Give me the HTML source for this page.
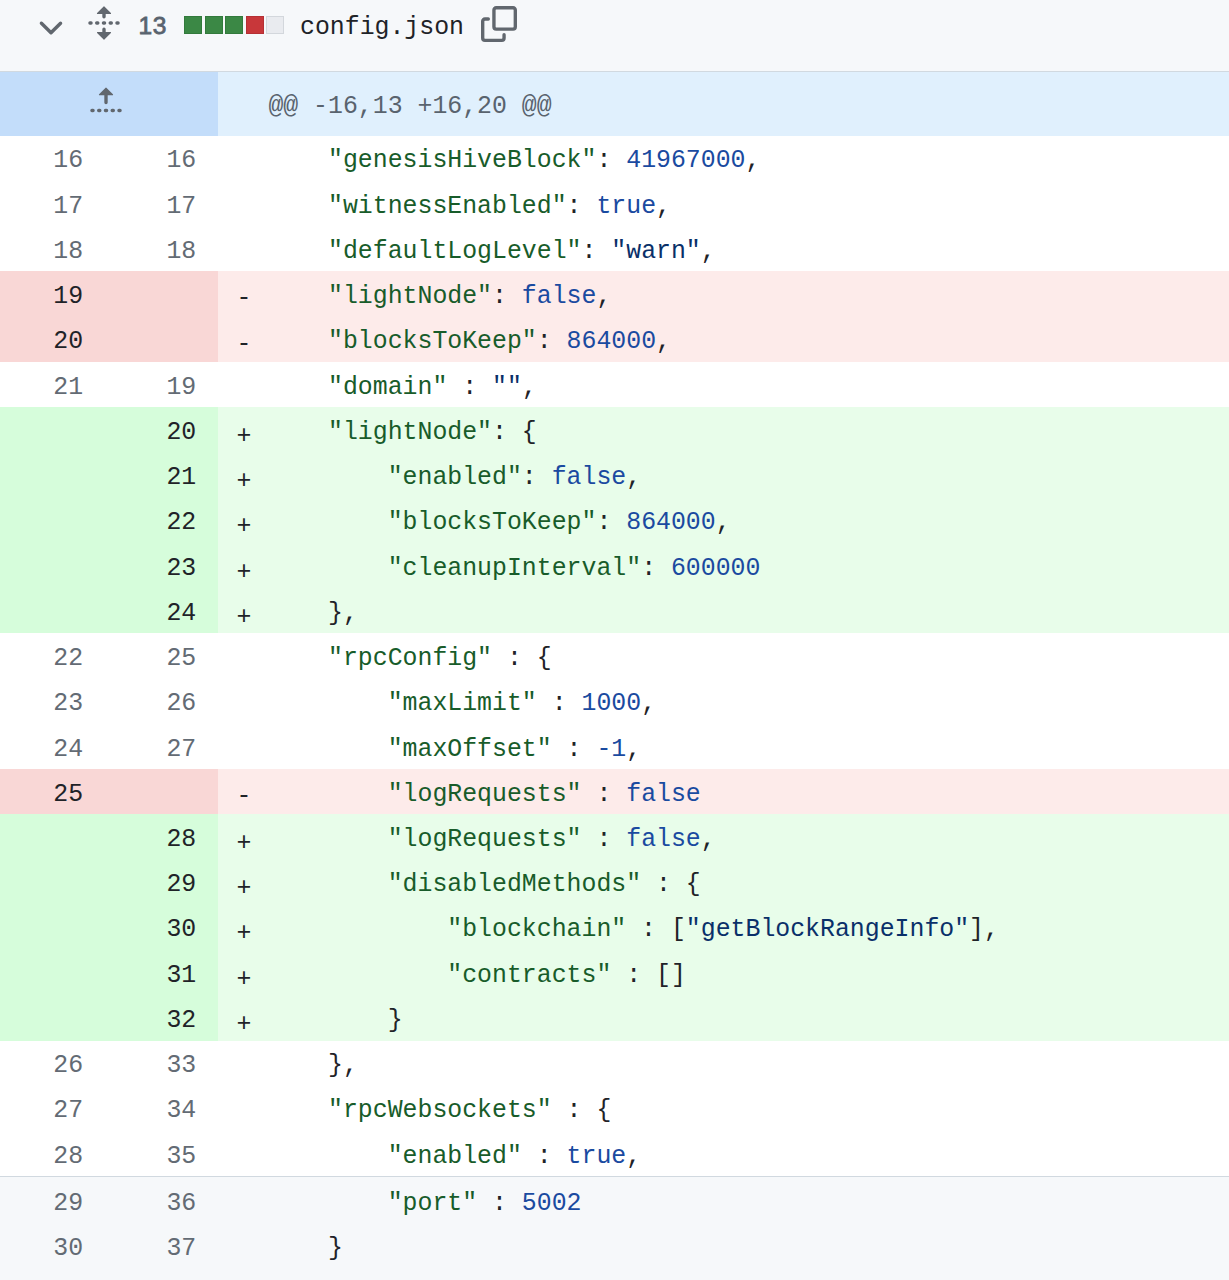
<!DOCTYPE html>
<html><head><meta charset="utf-8"><style>
*{margin:0;padding:0;box-sizing:border-box}
html,body{width:1229px;height:1280px;overflow:hidden;background:#fff}
body{position:relative;font-family:"Liberation Mono",monospace;}
.hdr{position:absolute;left:0;top:0;width:1229px;height:72px;background:#f6f8fa;border-bottom:1px solid #d1d9e0}
.hunk{position:absolute;left:0;top:72px;width:1229px;height:63.70px;background:#e0f0fd}
.hunk .num{position:absolute;left:0;top:0;width:218.40px;height:100%;background:#c3ddfa}
.hunk .tx{position:absolute;left:268.40px;top:3.1px;line-height:63.70px;font-size:24.857px;color:#59636e;white-space:pre}
.row{position:absolute;left:0;width:1229px;height:45.74px;background:#fff}
.row .num{position:absolute;left:0;top:0;width:218.40px;height:100%}
.ln{position:absolute;top:2.7px;line-height:45.24px;font-size:24.857px;color:#636b74;text-align:right;white-space:pre}
.ln.ol{right:1145.90px}
.ln.nl{right:1032.80px}
.code{position:absolute;left:218.40px;right:0;top:0;height:100%;font-size:24.857px;line-height:45.24px;color:#1f2328;white-space:pre}
.mk{position:absolute;left:18.10px;top:4.9px}
.add .mk{top:6.7px}
.tx{position:absolute;left:50.00px;top:2.7px}
.k{color:#185c2a}.n{color:#1a4aa0}.s{color:#0a3069}
.del .num{background:#f9d7d6}.del .code{background:#fdebea}
.add .num{background:#d6fddb}.add .code{background:#e8fdea}
.del .ln,.add .ln{color:#1f2328}
.foot{background:#f6f8fa}
.foot .ln,.foot .tx{top:5.0px}
.footbg{position:absolute;left:0;top:1176.22px;width:1229px;bottom:0;background:#f6f8fa}
.footline{position:absolute;left:0;top:1176.22px;width:1229px;height:1px;background:#d1d9e0}
.cnt{position:absolute;left:138.5px;top:0;line-height:52px;font-family:"Liberation Sans",sans-serif;font-weight:normal;-webkit-text-stroke:0.8px #59636e;font-size:24.5px;color:#59636e;letter-spacing:0.6px}
.sq{position:absolute;top:16px;width:18px;height:18px}
.fn{position:absolute;left:300px;top:0;line-height:54.6px;font-size:24.857px;color:#1f2328;white-space:pre}
</style></head>
<body>
<div class="hdr"><svg style="position:absolute;left:33.40px;top:8.10px" width="36.00" height="36.00" viewBox="0 0 16 16" fill="#61676e"><path d="M12.78 6.22a.749.749 0 0 1 0 1.06l-4.25 4.25a.749.749 0 0 1-1.06 0L3.22 7.28a.749.749 0 0 1 .326-1.275.749.749 0 0 1 .734.215L8 9.939l3.72-3.719a.749.749 0 0 1 1.06 0Z"/></svg><svg style="position:absolute;left:86.45px;top:5.10px" width="36.00" height="36.00" viewBox="0 0 16 16" fill="#61676e"><path d="m8.177.677 2.896 2.896a.25.25 0 0 1-.177.427H8.75v1.25a.75.75 0 0 1-1.5 0V4H5.104a.25.25 0 0 1-.177-.427L7.823.677a.25.25 0 0 1 .354 0ZM7.25 10.75a.75.75 0 0 1 1.5 0V12h2.146a.25.25 0 0 1 .177.427l-2.896 2.896a.25.25 0 0 1-.354 0l-2.896-2.896A.25.25 0 0 1 5.104 12H7.25v-1.25Zm-5-2a.75.75 0 0 0 0-1.5h-.5a.75.75 0 0 0 0 1.5h.5ZM6 8a.75.75 0 0 1-.75.75h-.5a.75.75 0 0 1 0-1.5h.5A.75.75 0 0 1 6 8Zm2.25.75a.75.75 0 0 0 0-1.5h-.5a.75.75 0 0 0 0 1.5h.5ZM12 8a.75.75 0 0 1-.75.75h-.5a.75.75 0 0 1 0-1.5h.5A.75.75 0 0 1 12 8Zm2.25.75a.75.75 0 0 0 0-1.5h-.5a.75.75 0 0 0 0 1.5h.5Z"/></svg><span class="cnt">13</span><div class="sq" style="left:184.30px;background:#3b8845;border:1px solid #327a3c"></div><div class="sq" style="left:204.73px;background:#3b8845;border:1px solid #327a3c"></div><div class="sq" style="left:225.16px;background:#3b8845;border:1px solid #327a3c"></div><div class="sq" style="left:245.59px;background:#c8373a;border:1px solid #b53034"></div><div class="sq" style="left:266.02px;background:#e9ebef;border:1px solid #d3d7dc"></div><span class="fn">config.json</span><svg style="position:absolute;left:481.00px;top:5.60px" width="36.00" height="36.00" viewBox="0 0 16 16" fill="#61676e"><path d="M0 6.75C0 5.784.784 5 1.75 5h1.5a.75.75 0 0 1 0 1.5h-1.5a.25.25 0 0 0-.25.25v7.5c0 .138.112.25.25.25h7.5a.25.25 0 0 0 .25-.25v-1.5a.75.75 0 0 1 1.5 0v1.5A1.75 1.75 0 0 1 9.25 16h-7.5A1.75 1.75 0 0 1 0 14.25ZM5 1.75C5 .784 5.784 0 6.75 0h7.5C15.216 0 16 .784 16 1.75v7.5A1.75 1.75 0 0 1 14.25 11h-7.5A1.75 1.75 0 0 1 5 9.25Zm1.75-.25a.25.25 0 0 0-.25.25v7.5c0 .138.112.25.25.25h7.5a.25.25 0 0 0 .25-.25v-7.5a.25.25 0 0 0-.25-.25Z"/></svg></div>
<div class="hunk"><div class="num"></div><svg style="position:absolute;left:88.00px;top:12.10px" width="36.00" height="36.00" viewBox="0 0 16 16" fill="#61676e"><path d="M7.823 1.677 4.927 4.573A.25.25 0 0 0 5.104 5H7.25v3.236a.75.75 0 1 0 1.5 0V5h2.146a.25.25 0 0 0 .177-.427L8.177 1.677a.25.25 0 0 0-.354 0ZM13.75 11a.75.75 0 0 0 0 1.5h.5a.75.75 0 0 0 0-1.5h-.5Zm-3.75.75a.75.75 0 0 1 .75-.75h.5a.75.75 0 0 1 0 1.5h-.5a.75.75 0 0 1-.75-.75ZM7.75 11a.75.75 0 0 0 0 1.5h.5a.75.75 0 0 0 0-1.5h-.5ZM4 11.75a.75.75 0 0 1 .75-.75h.5a.75.75 0 0 1 0 1.5h-.5a.75.75 0 0 1-.75-.75ZM1.75 11a.75.75 0 0 0 0 1.5h.5a.75.75 0 0 0 0-1.5h-.5Z"/></svg><span class="tx">@@ -16,13 +16,20 @@</span></div>
<div class="footbg"></div>
<div class="row ctx" style="top:135.70px"><div class="num"></div><span class="ln ol">16</span><span class="ln nl">16</span><div class="code"><span class="mk"></span><span class="tx">    <span class="k">&quot;genesisHiveBlock&quot;</span>: <span class="n">41967000</span>,</span></div></div>
<div class="row ctx" style="top:180.94px"><div class="num"></div><span class="ln ol">17</span><span class="ln nl">17</span><div class="code"><span class="mk"></span><span class="tx">    <span class="k">&quot;witnessEnabled&quot;</span>: <span class="n">true</span>,</span></div></div>
<div class="row ctx" style="top:226.18px"><div class="num"></div><span class="ln ol">18</span><span class="ln nl">18</span><div class="code"><span class="mk"></span><span class="tx">    <span class="k">&quot;defaultLogLevel&quot;</span>: <span class="s">&quot;warn&quot;</span>,</span></div></div>
<div class="row del" style="top:271.42px"><div class="num"></div><span class="ln ol">19</span><span class="ln nl"></span><div class="code"><span class="mk">-</span><span class="tx">    <span class="k">&quot;lightNode&quot;</span>: <span class="n">false</span>,</span></div></div>
<div class="row del" style="top:316.66px"><div class="num"></div><span class="ln ol">20</span><span class="ln nl"></span><div class="code"><span class="mk">-</span><span class="tx">    <span class="k">&quot;blocksToKeep&quot;</span>: <span class="n">864000</span>,</span></div></div>
<div class="row ctx" style="top:361.90px"><div class="num"></div><span class="ln ol">21</span><span class="ln nl">19</span><div class="code"><span class="mk"></span><span class="tx">    <span class="k">&quot;domain&quot;</span> : <span class="s">&quot;&quot;</span>,</span></div></div>
<div class="row add" style="top:407.14px"><div class="num"></div><span class="ln ol"></span><span class="ln nl">20</span><div class="code"><span class="mk">+</span><span class="tx">    <span class="k">&quot;lightNode&quot;</span>: {</span></div></div>
<div class="row add" style="top:452.38px"><div class="num"></div><span class="ln ol"></span><span class="ln nl">21</span><div class="code"><span class="mk">+</span><span class="tx">        <span class="k">&quot;enabled&quot;</span>: <span class="n">false</span>,</span></div></div>
<div class="row add" style="top:497.62px"><div class="num"></div><span class="ln ol"></span><span class="ln nl">22</span><div class="code"><span class="mk">+</span><span class="tx">        <span class="k">&quot;blocksToKeep&quot;</span>: <span class="n">864000</span>,</span></div></div>
<div class="row add" style="top:542.86px"><div class="num"></div><span class="ln ol"></span><span class="ln nl">23</span><div class="code"><span class="mk">+</span><span class="tx">        <span class="k">&quot;cleanupInterval&quot;</span>: <span class="n">600000</span></span></div></div>
<div class="row add" style="top:588.10px"><div class="num"></div><span class="ln ol"></span><span class="ln nl">24</span><div class="code"><span class="mk">+</span><span class="tx">    },</span></div></div>
<div class="row ctx" style="top:633.34px"><div class="num"></div><span class="ln ol">22</span><span class="ln nl">25</span><div class="code"><span class="mk"></span><span class="tx">    <span class="k">&quot;rpcConfig&quot;</span> : {</span></div></div>
<div class="row ctx" style="top:678.58px"><div class="num"></div><span class="ln ol">23</span><span class="ln nl">26</span><div class="code"><span class="mk"></span><span class="tx">        <span class="k">&quot;maxLimit&quot;</span> : <span class="n">1000</span>,</span></div></div>
<div class="row ctx" style="top:723.82px"><div class="num"></div><span class="ln ol">24</span><span class="ln nl">27</span><div class="code"><span class="mk"></span><span class="tx">        <span class="k">&quot;maxOffset&quot;</span> : <span class="n">-1</span>,</span></div></div>
<div class="row del" style="top:769.06px"><div class="num"></div><span class="ln ol">25</span><span class="ln nl"></span><div class="code"><span class="mk">-</span><span class="tx">        <span class="k">&quot;logRequests&quot;</span> : <span class="n">false</span></span></div></div>
<div class="row add" style="top:814.30px"><div class="num"></div><span class="ln ol"></span><span class="ln nl">28</span><div class="code"><span class="mk">+</span><span class="tx">        <span class="k">&quot;logRequests&quot;</span> : <span class="n">false</span>,</span></div></div>
<div class="row add" style="top:859.54px"><div class="num"></div><span class="ln ol"></span><span class="ln nl">29</span><div class="code"><span class="mk">+</span><span class="tx">        <span class="k">&quot;disabledMethods&quot;</span> : {</span></div></div>
<div class="row add" style="top:904.78px"><div class="num"></div><span class="ln ol"></span><span class="ln nl">30</span><div class="code"><span class="mk">+</span><span class="tx">            <span class="k">&quot;blockchain&quot;</span> : [<span class="s">&quot;getBlockRangeInfo&quot;</span>],</span></div></div>
<div class="row add" style="top:950.02px"><div class="num"></div><span class="ln ol"></span><span class="ln nl">31</span><div class="code"><span class="mk">+</span><span class="tx">            <span class="k">&quot;contracts&quot;</span> : []</span></div></div>
<div class="row add" style="top:995.26px"><div class="num"></div><span class="ln ol"></span><span class="ln nl">32</span><div class="code"><span class="mk">+</span><span class="tx">        }</span></div></div>
<div class="row ctx" style="top:1040.50px"><div class="num"></div><span class="ln ol">26</span><span class="ln nl">33</span><div class="code"><span class="mk"></span><span class="tx">    },</span></div></div>
<div class="row ctx" style="top:1085.74px"><div class="num"></div><span class="ln ol">27</span><span class="ln nl">34</span><div class="code"><span class="mk"></span><span class="tx">    <span class="k">&quot;rpcWebsockets&quot;</span> : {</span></div></div>
<div class="row ctx" style="top:1130.98px"><div class="num"></div><span class="ln ol">28</span><span class="ln nl">35</span><div class="code"><span class="mk"></span><span class="tx">        <span class="k">&quot;enabled&quot;</span> : <span class="n">true</span>,</span></div></div>
<div class="row ctx foot" style="top:1176.22px"><div class="num"></div><span class="ln ol">29</span><span class="ln nl">36</span><div class="code"><span class="mk"></span><span class="tx">        <span class="k">&quot;port&quot;</span> : <span class="n">5002</span></span></div></div>
<div class="row ctx foot" style="top:1221.46px"><div class="num"></div><span class="ln ol">30</span><span class="ln nl">37</span><div class="code"><span class="mk"></span><span class="tx">    }</span></div></div>
<div class="footline"></div>
</body></html>
